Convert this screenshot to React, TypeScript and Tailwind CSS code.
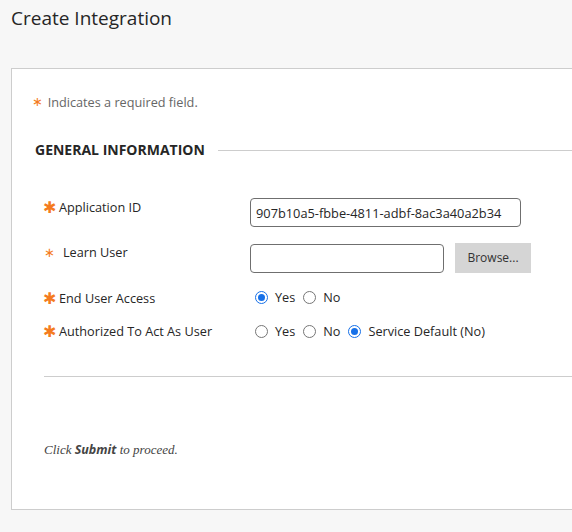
import React from 'react';

const sans = { fontFamily: '"Open Sans", "Noto Sans", sans-serif' };

const BigStar = () => (
  <span
    className="-ml-[1px] w-[16px] shrink-0 text-[16px] leading-none text-[#f47b20]"
    style={{ fontFamily: '"DejaVu Sans", sans-serif' }}
  >
    ✱
  </span>
);

const SmallStar = () => (
  <span className="w-[19px] shrink-0 text-[13px] leading-none text-[#f47b20]" style={{ fontFamily: '"DejaVu Sans", sans-serif' }}>
    ∗
  </span>
);

const Radio: React.FC<{ checked?: boolean; label: string }> = ({ checked, label }) => (
  <label className="flex items-center gap-[7px]">
    {checked ? (
      <span className="flex h-[13px] w-[13px] items-center justify-center rounded-full border border-[#1670e8] bg-white">
        <span className="h-[7px] w-[7px] rounded-full bg-[#1670e8]" />
      </span>
    ) : (
      <span className="h-[13px] w-[13px] rounded-full border border-[#767676] bg-white" />
    )}
    <span>{label}</span>
  </label>
);

const Row: React.FC<{ star: React.ReactNode; label: string; children: React.ReactNode; className?: string }> = ({
  star,
  label,
  children,
  className = '',
}) => (
  <div className={`flex ${className}`}>
    <div className="flex h-[18px] w-[206px] shrink-0 items-center self-start pt-[1px]">
      {star}
      <span>{label}</span>
    </div>
    {children}
  </div>
);

export default function App() {
  return (
    <div className="h-[532px] w-[572px] overflow-hidden bg-[#f7f7f7] pl-[11px] text-[#262626]" style={sans}>
      <h1 className="pt-[5px] text-[19px] leading-[26px] text-[#262626]">Create Integration</h1>

      <div className="mt-[37px] w-[600px] border border-[#cdcdcd] bg-white pl-[32px] text-[12.7px]">
        {/* required note */}
        <p className="flex items-center pt-[24px] leading-[18px] text-[#666]">
          <span className="mr-[5px] -ml-[12px] text-[#f47b20]" style={{ fontFamily: '"DejaVu Sans", sans-serif' }}>
            ∗
          </span>
          Indicates a required field.
        </p>

        {/* section heading */}
        <div className="mt-[29px] -ml-[9px] flex items-center gap-[13px]">
          <h2 className="text-[14px] font-bold leading-[20px] text-[#262626]">GENERAL INFORMATION</h2>
          <div className="h-px flex-1 bg-[#cdcdcd]" />
        </div>

        <div className="mt-[38px]">
          <Row star={<BigStar />} label="Application ID">
            <input
              readOnly
              value="907b10a5-fbbe-4811-adbf-8ac3a40a2b34"
              className="h-[29px] w-[271px] rounded-[4px] border border-[#6f6f6f] px-[5px] text-[12.8px] text-[#262626] outline-none"
              style={sans}
            />
          </Row>

          <Row star={<SmallStar />} label="Learn User" className="mt-[16px]">
            <div className="flex items-center gap-[11px]">
              <input
                readOnly
                className="h-[29px] w-[194px] rounded-[4px] border border-[#6f6f6f] px-[5px] outline-none"
              />
              <button className="h-[30px] w-[76px] bg-[#d5d5d5] text-[12px] text-[#333]" style={sans}>
                Browse...
              </button>
            </div>
          </Row>

          <Row star={<BigStar />} label="End User Access" className="mt-[16px]">
            <div className="-mt-[1px] flex h-[20px] items-center gap-[8px] pl-[5px]">
              <Radio checked label="Yes" />
              <Radio label="No" />
            </div>
          </Row>

          <Row star={<BigStar />} label="Authorized To Act As User" className="mt-[14px]">
            <div className="flex h-[20px] items-center gap-[8px] pl-[5px]">
              <Radio label="Yes" />
              <Radio label="No" />
              <Radio checked label="Service Default (No)" />
            </div>
          </Row>
        </div>

        <div className="mt-[34px] h-px bg-[#cdcdcd]" />

        <p
          className="pt-[63px] pb-[49px] text-[13px] italic leading-[20px] text-[#444]"
          style={{ fontFamily: '"Liberation Serif", "Times New Roman", serif' }}
        >
          Click{' '}
          <b className="text-[12.5px] font-bold" style={sans}>
            Submit
          </b>{' '}
          to proceed.
        </p>
      </div>
    </div>
  );
}
